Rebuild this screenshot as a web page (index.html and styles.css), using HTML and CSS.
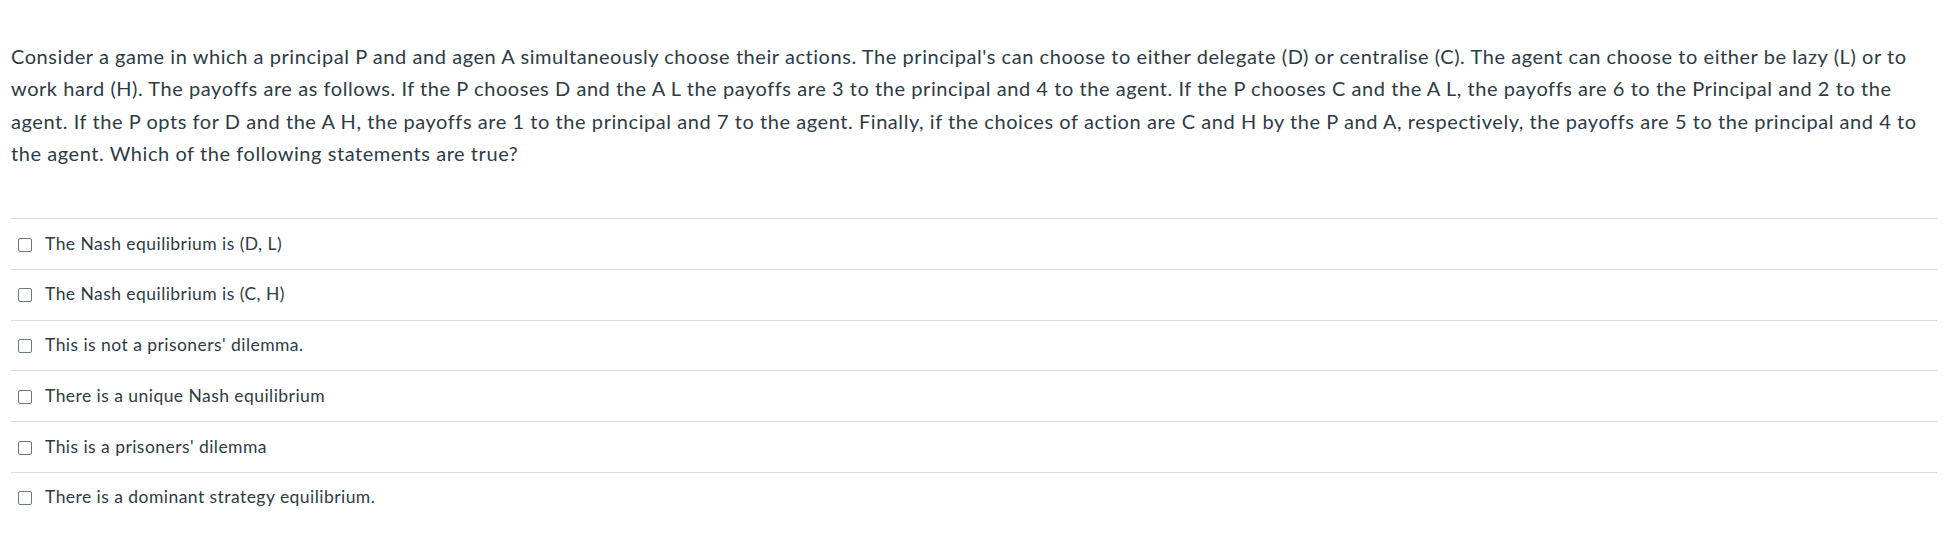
FILE: index.html
```html
<!DOCTYPE html>
<html lang="en">
<head>
<meta charset="utf-8">
<title>Question</title>
<link rel="stylesheet" href="styles.css">
</head>
<body>
<div class="question">
  <div class="question-text">
    <p>Consider a game in which a principal P and and agen A simultaneously choose their actions. The principal's can choose to either delegate (D) or centralise (C). The agent can choose to either be lazy (L) or to work hard (H). The payoffs are as follows. If the P chooses D and the A L the payoffs are 3 to the principal and 4 to the agent. If the P chooses C and the A L, the payoffs are 6 to the Principal and 2 to the agent. If the P opts for D and the A H, the payoffs are 1 to the principal and 7 to the agent. Finally, if the choices of action are C and H by the P and A, respectively, the payoffs are 5 to the principal and 4 to the agent. Which of the following statements are true?</p>
  </div>
  <div class="answers">
    <label class="answer"><span class="box"></span><span class="label">The Nash equilibrium is (D, L)</span></label>
    <label class="answer"><span class="box"></span><span class="label">The Nash equilibrium is (C, H)</span></label>
    <label class="answer"><span class="box"></span><span class="label">This is not a prisoners' dilemma.</span></label>
    <label class="answer"><span class="box"></span><span class="label">There is a unique Nash equilibrium</span></label>
    <label class="answer"><span class="box"></span><span class="label">This is a prisoners' dilemma</span></label>
    <label class="answer"><span class="box"></span><span class="label">There is a dominant strategy equilibrium.</span></label>
  </div>
</div>
</body>
</html>
```
FILE: styles.css
```css
html, body {
  margin: 0;
  padding: 0;
  background: #ffffff;
}
body {
  font-family: Lato, "Open Sans", sans-serif;
  color: #2d3b45;
}
.question {
  padding: 40px 11px 0 11px;
}
.question-text p {
  margin: 0;
  font-size: 20px;
  line-height: 32.3px;
  letter-spacing: 0.56px;
}
.answers {
  margin-top: 49px;
}
.answer {
  display: flex;
  align-items: center;
  gap: 13px;
  height: 49.75px;
  border-top: 1px solid #dcdcdc;
  padding-left: 7px;
  font-size: 17.5px;
  letter-spacing: 0.45px;
}
.box {
  width: 12px;
  height: 12px;
  border: 1.5px solid #6b7780;
  border-radius: 2px;
  flex: none;
  margin-top: 1px;
}
.label {
  line-height: 1.2;
  margin-bottom: 2px;
}
```
